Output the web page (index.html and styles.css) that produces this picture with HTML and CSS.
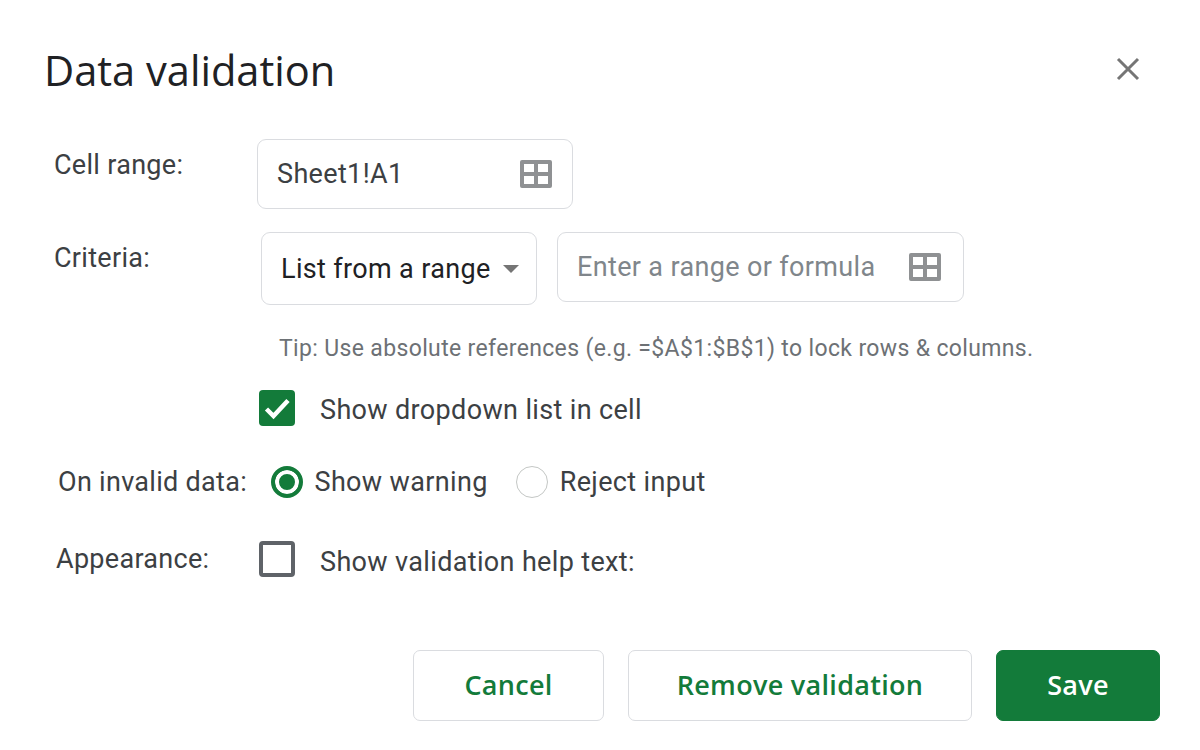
FILE: index.html
```html
<!DOCTYPE html>
<html lang="en">

<head>
    <meta charset="UTF-8">
    <title>Data validation</title>
    <link rel="stylesheet" href="styles.css">
</head>

<body>
    <div class="dialog">
        <div class="dialog_head">
            <div class="dialog_title">Data validation</div>
            <svg class="close" width="24" height="24" viewBox="0 0 24 24">
                <path d="M2 2L22 22M22 2L2 22" fill="none" stroke="#757575" stroke-width="3"></path>
            </svg>
        </div>

        <div class="row row_range">
            <div class="label label_range">Cell range:</div>
            <div class="field field_range">
                <span class="field_text">Sheet1!A1</span>
                <svg class="grid_icon" width="32" height="28" viewBox="0 0 32 28">
                    <path d="M0 2a2 2 0 0 1 2-2h28a2 2 0 0 1 2 2v24a2 2 0 0 1-2 2H2a2 2 0 0 1-2-2zM4 4V12H14V4zM18 4V12H28V4zM4 16V24H14V16zM18 16V24H28V16z" fill="#8f9193" fill-rule="evenodd"></path>
                </svg>
            </div>
        </div>

        <div class="row row_criteria">
            <div class="label label_criteria">Criteria:</div>
            <div class="field field_select">
                <span class="field_text">List from a range</span>
                <span class="caret"></span>
            </div>
            <div class="field field_formula">
                <span class="field_text placeholder">Enter a range or formula</span>
                <svg class="grid_icon" width="32" height="28" viewBox="0 0 32 28">
                    <path d="M0 2a2 2 0 0 1 2-2h28a2 2 0 0 1 2 2v24a2 2 0 0 1-2 2H2a2 2 0 0 1-2-2zM4 4V12H14V4zM18 4V12H28V4zM4 16V24H14V16zM18 16V24H28V16z" fill="#8f9193" fill-rule="evenodd"></path>
                </svg>
            </div>
        </div>

        <div class="tip">Tip: Use absolute references (e.g. =$A$1:$B$1) to lock rows &amp; columns.</div>

        <div class="row row_dropdown">
            <div class="checkbox checked">
                <svg width="36" height="36" viewBox="0 0 36 36">
                    <path d="M7.500 19L14.500 26L29 10.500" fill="none" stroke="#fff" stroke-width="4.500"></path>
                </svg>
            </div>
            <div class="check_text">Show dropdown list in cell</div>
        </div>

        <div class="row row_invalid">
            <div class="label label_invalid">On invalid data:</div>
            <div class="radio radio_on"></div>
            <div class="radio_text">Show warning</div>
            <div class="radio radio_off"></div>
            <div class="radio_text">Reject input</div>
        </div>

        <div class="row row_appearance">
            <div class="label label_appearance">Appearance:</div>
            <div class="checkbox"></div>
            <div class="check_text">Show validation help text:</div>
        </div>

        <div class="actions">
            <div class="btn">Cancel</div>
            <div class="btn btn_remove">Remove validation</div>
            <div class="btn btn_save">Save</div>
        </div>
    </div>
</body>

</html>
```

FILE: styles.css
```css
html,body,div,span {
    padding: 0;
    margin: 0;
    box-sizing: border-box;
}
body {
    background-color: #fff;
    font-family: Roboto, "Liberation Sans", sans-serif;
    font-size: 27px;
    color: #3c4043;
    letter-spacing: 0.35px;
}
.dialog {
    width: 1200px;
    height: 750px;
    overflow: hidden;
}
.dialog_head {
    height: 139px;
    padding: 41px 60px 0 44px;
    display: flex;
    justify-content: space-between;
    align-items: flex-start;
}
.dialog_title {
    font-family: "Open Sans", sans-serif;
    font-size: 41.600px;
    line-height: 58px;
    letter-spacing: 0;
    color: #202124;
}
.close {
    margin-top: 16px;
}
.row {
    display: flex;
}
.label {
    flex: none;
    letter-spacing: 0.3px;
}
.field {
    flex: none;
    display: flex;
    align-items: center;
    justify-content: space-between;
    border: 1.500px solid #dadce0;
    border-radius: 9px;
}
.row_range {
    padding-left: 54px;
}
.label_range {
    width: 203px;
    line-height: 52px;
}
.field_range {
    width: 316px;
    height: 70px;
    padding: 0 20px 0 19px;
}
.row_criteria {
    padding-left: 54px;
    margin-top: 23px;
}
.label_criteria {
    width: 207px;
    line-height: 52px;
}
.field_select {
    width: 276px;
    height: 73px;
    padding: 0 17px 0 19px;
    color: #202124;
}
.caret {
    width: 0;
    height: 0;
    border-left: 8px solid transparent;
    border-right: 8px solid transparent;
    border-top: 8px solid #757575;
}
.field_formula {
    width: 407px;
    height: 70px;
    margin-left: 20px;
    padding: 0 22px 0 19px;
}
.placeholder {
    color: #80868b;
}
.tip {
    margin-top: 28px;
    padding-left: 279px;
    font-size: 23px;
    line-height: 32px;
    color: #6d7175;
    letter-spacing: 0.35px;
}
.row_dropdown {
    padding-left: 259px;
    margin-top: 25px;
    align-items: flex-start;
}
.checkbox {
    flex: none;
    width: 36px;
    height: 36px;
    border: 4px solid #5f6368;
    border-radius: 4px;
}
.checkbox.checked {
    background-color: #137b3a;
    border: none;
}
.checkbox svg {
    display: block;
}
.check_text {
    margin-left: 25px;
    line-height: 40px;
}
.row_invalid {
    padding-left: 58px;
    margin-top: 36px;
    align-items: center;
}
.label_invalid {
    width: 213px;
}
.radio {
    flex: none;
    width: 32px;
    height: 32px;
    border-radius: 50%;
}
.radio_on {
    border: 4px solid #137b3a;
    background-color: #137b3a;
    box-shadow: inset 0 0 0 4px #fff;
}
.radio_off {
    border: 1.500px solid #c4c7c5;
    margin-left: 28.500px;
}
.radio_text {
    margin-left: 11.500px;
}
.row_appearance {
    padding-left: 56px;
    margin-top: 43px;
    align-items: flex-start;
}
.label_appearance {
    width: 203px;
    line-height: 36px;
}
.row_appearance .check_text {
    line-height: 42px;
}
.actions {
    margin-top: 67px;
    padding-right: 40px;
    display: flex;
    justify-content: flex-end;
    gap: 24px;
}
.btn {
    width: 191px;
    height: 71px;
    line-height: 67px;
    text-align: center;
    border: 1.500px solid #dadce0;
    border-radius: 7px;
    color: #137b3a;
    font-family: "Open Sans", sans-serif;
    font-weight: 560;
    font-size: 27px;
    letter-spacing: 0.3px;
}
.btn_remove {
    width: 344px;
}
.btn_save {
    width: 164px;
    background-color: #137b3a;
    border-color: #137b3a;
    color: #fff;
}
```
